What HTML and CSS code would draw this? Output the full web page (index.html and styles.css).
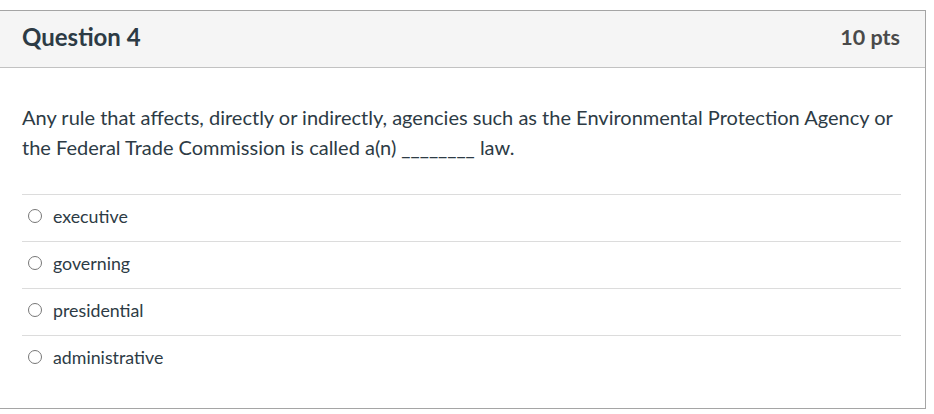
FILE: index.html
```html
<!DOCTYPE html>
<html>
<head>
<meta charset="utf-8">
<link rel="stylesheet" href="styles.css">
</head>
<body>
<div class="card">
  <div class="header">
    <span class="title">Question 4</span>
    <span class="pts">10 pts</span>
  </div>
  <div class="body">
    <p class="text">Any rule that affects, directly or indirectly, agencies such as the Environmental Protection Agency or the Federal Trade Commission is called a(n) ________ law.</p>
    <div class="answers">
      <label class="answer"><span class="radio"></span><span>executive</span></label>
      <label class="answer"><span class="radio"></span><span>governing</span></label>
      <label class="answer"><span class="radio"></span><span>presidential</span></label>
      <label class="answer"><span class="radio"></span><span>administrative</span></label>
    </div>
  </div>
</div>
</body>
</html>
```
FILE: styles.css
```css
html, body {
  margin: 0;
  padding: 0;
  background: #fff;
}
body {
  padding-top: 10px;
  font-family: Lato, "Liberation Sans", sans-serif;
  color: #2d3b45;
}
.card {
  width: 927px;
  margin-left: -1px;
  border: 1px solid #a5a5a5;
  box-sizing: border-box;
  height: 399px;
}
.header {
  display: flex;
  justify-content: space-between;
  align-items: center;
  height: 57px;
  box-sizing: border-box;
  background: #f5f5f5;
  border-bottom: 1px solid #c2c2c2;
  padding: 0 25px 5px 22px;
}
.title {
  font-size: 24px;
  font-weight: bold;
  color: #2d3b45;
}
.pts {
  font-size: 21.5px;
  font-weight: bold;
  color: #4a4a4a;
}
.body {
  padding: 0 24px 0 22px;
}
.text {
  margin: 34px 0 0 0;
  font-size: 20px;
  line-height: 30px;
  color: #2d3b45;
}
.answers {
  margin-top: 32px;
}
.answer {
  display: flex;
  align-items: center;
  height: 47px;
  border-top: 1px solid #dcdcdc;
  box-sizing: border-box;
  font-size: 17.8px;
  color: #2d3b45;
  padding: 0 0 4px 6px;
}
.radio {
  width: 14px;
  height: 14px;
  border: 1px solid #777;
  border-radius: 50%;
  margin-right: 11px;
  box-sizing: border-box;
}
```
